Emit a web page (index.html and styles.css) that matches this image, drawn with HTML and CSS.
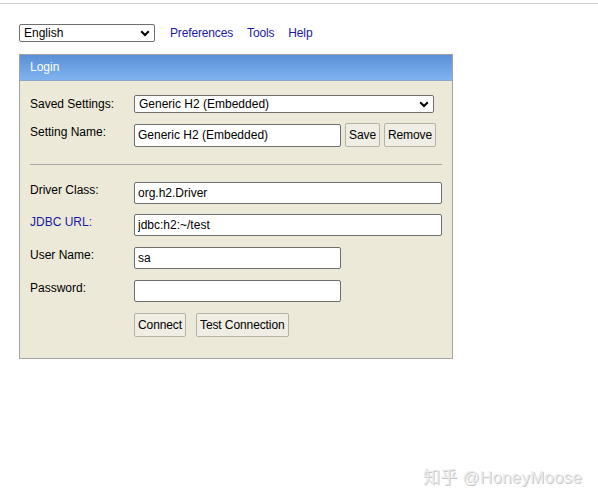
FILE: index.html
```html
<!DOCTYPE html>
<html>
<head>
<meta charset="utf-8">
<link rel="stylesheet" href="styles.css">
</head>
<body>
<div class="topline"></div>
<div class="page">
  <div class="nav">
    <div class="selwrap lang">
      <select class="sel"><option>English</option></select>
      <svg class="chev" width="10" height="7" viewBox="0 0 10 7"><path d="M1.2 1.2 L5 5 L8.8 1.2" fill="none" stroke="#000" stroke-width="2"/></svg>
    </div>
    <a class="link first" href="#">Preferences</a>
    <a class="link" href="#">Tools</a>
    <a class="link" href="#">Help</a>
  </div>

  <div class="panel">
    <div class="panel-head">Login</div>
    <div class="panel-body">
      <div class="row r-saved">
        <div class="lbl">Saved Settings:</div>
        <div class="selwrap saved">
          <select class="sel"><option>Generic H2 (Embedded)</option></select>
          <svg class="chev" width="10" height="7" viewBox="0 0 10 7"><path d="M1.2 1.2 L5 5 L8.8 1.2" fill="none" stroke="#000" stroke-width="2"/></svg>
        </div>
      </div>
      <div class="row r-name">
        <div class="lbl">Setting Name:</div>
        <div class="field">
          <input class="inp short" value="Generic H2 (Embedded)">
          <button class="btn">Save</button>
          <button class="btn">Remove</button>
        </div>
      </div>
      <div class="sep"></div>
      <div class="row r-std r-first">
        <div class="lbl">Driver Class:</div>
        <div class="field"><input class="inp long" value="org.h2.Driver"></div>
      </div>
      <div class="row r-std">
        <div class="lbl blue">JDBC URL:</div>
        <div class="field"><input class="inp long" value="jdbc:h2:~/test"></div>
      </div>
      <div class="row r-std">
        <div class="lbl">User Name:</div>
        <div class="field"><input class="inp short" value="sa"></div>
      </div>
      <div class="row r-std">
        <div class="lbl">Password:</div>
        <div class="field"><input class="inp short" type="password" value=""></div>
      </div>
      <div class="row r-btns">
        <div class="lbl"></div>
        <div class="field gap11">
          <button class="btn">Connect</button>
          <button class="btn">Test Connection</button>
        </div>
      </div>
    </div>
  </div>
</div>
<div class="watermark">知乎 @HoneyMoose</div>
</body>
</html>
```

FILE: styles.css
```css
html, body {
  margin: 0;
  padding: 0;
  background: #fff;
  font-family: "Liberation Sans", Arial, sans-serif;
  font-size: 12px;
  color: #000;
}
.topline {
  height: 3px;
  border-bottom: 1px solid #cfcfcf;
}
.page {
  padding: 20px 19px 0 19px;
}
.nav {
  display: flex;
  align-items: center;
  height: 18px;
}
.link {
  color: #1a1aa0;
  text-decoration: none;
  font-size: 12px;
  letter-spacing: -0.15px;
  margin-left: 14px;
}
.link.first { margin-left: 15px; }

.selwrap {
  position: relative;
  height: 18px;
}
.selwrap.lang { width: 136px; }
.selwrap.saved { width: 300px; }
.sel {
  -webkit-appearance: none;
  appearance: none;
  box-sizing: border-box;
  width: 100%;
  height: 18px;
  margin: 0;
  border: 1px solid #6f6f6f;
  border-radius: 2px;
  background: #fff;
  font-family: "Liberation Sans", Arial, sans-serif;
  font-size: 12px;
  color: #000;
  padding: 0 0 0 4px;
  line-height: 16px;
  outline: none;
}
.chev {
  position: absolute;
  right: 5px;
  top: 6px;
  pointer-events: none;
}

.panel {
  margin-top: 12px;
  width: 434px;
  box-sizing: border-box;
  border: 1px solid #a3a3a3;
  background: #ece9d8;
}
.panel-head {
  height: 25px;
  line-height: 24px;
  padding-left: 10px;
  color: #fff;
  font-size: 12px;
  background: linear-gradient(#5b8fd8, #7fb4ef);
  border-bottom: 1px solid #8aa6c8;
}
.panel-body {
  padding: 14px 10px 21px 10px;
}
.row {
  display: grid;
  grid-template-columns: 104px 1fr;
  align-items: start;
}
.lbl {
  line-height: 16px;
  font-size: 12px;
  color: #000;
}
.lbl.blue { color: #1a1aa6; }
.r-saved .lbl { line-height: 18px; }
.r-saved { margin-bottom: 10px; }
.r-name .lbl { padding-top: 1px; }
.r-std { margin-bottom: 11px; }
.r-std.r-first { margin-bottom: 10px; }
.field {
  display: flex;
  align-items: center;
  gap: 4px;
}
.field.gap11 { gap: 10px; }
.inp {
  box-sizing: border-box;
  height: 22px;
  margin: 0;
  border: 1px solid #6f6f6f;
  border-radius: 2px;
  background: #fff;
  font-family: "Liberation Sans", Arial, sans-serif;
  font-size: 12px;
  color: #000;
  padding: 0 3px;
  outline: none;
}
.r-name .inp { height: 23px; }
.inp.short { width: 207px; }
.inp.long { width: 308px; }
.btn {
  box-sizing: border-box;
  height: 24px;
  margin: 0;
  padding: 0 3px;
  border: 1px solid #b5b3a8;
  border-radius: 2px;
  background: #efede4;
  font-family: "Liberation Sans", Arial, sans-serif;
  font-size: 12px;
  letter-spacing: -0.1px;
  color: #000;
}
.sep {
  height: 1px;
  background: #a8a8a0;
  margin: 17px 0 17px 0;
}
.watermark {
  position: absolute;
  left: 423px;
  top: 463px;
  font-family: "Liberation Sans", "Noto Sans CJK SC", sans-serif;
  font-size: 17px;
  color: #ececec;
  text-shadow: 1px 1px 0 #c8c8c8;
  letter-spacing: 0.2px;
}
```
